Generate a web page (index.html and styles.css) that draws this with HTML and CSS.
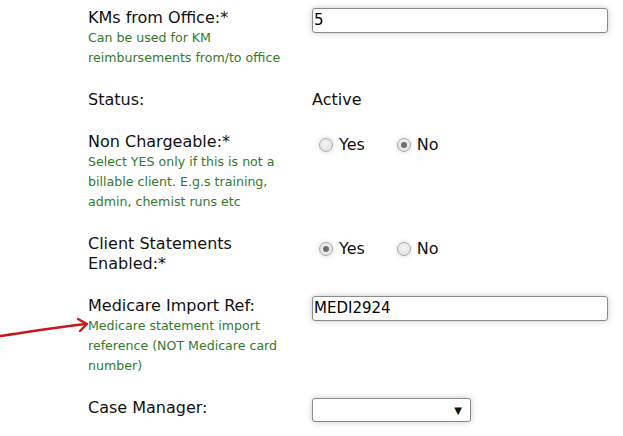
FILE: index.html
```html
<!DOCTYPE html>
<html>
<head>
<meta charset="utf-8">
<link rel="stylesheet" href="styles.css">
</head>
<body>
<svg class="arrow" width="100" height="30" viewBox="0 0 100 30" aria-hidden="true">
  <path d="M0 25 C 22 22, 50 17, 86 13" fill="none" stroke="#c8171c" stroke-width="2.4" stroke-linecap="round"/>
  <path d="M78 8 L87 13 L80 20" fill="none" stroke="#c8171c" stroke-width="2.4" stroke-linecap="round" stroke-linejoin="round"/>
</svg>
<form class="form">
  <div class="row">
    <div class="label">
      <div class="title">KMs from Office:*</div>
      <div class="help">Can be used for KM reimbursements from/to office</div>
    </div>
    <div class="field"><div class="input wide">5</div></div>
  </div>

  <div class="row">
    <div class="label"><div class="title">Status:</div></div>
    <div class="field"><div class="value">Active</div></div>
  </div>

  <div class="row">
    <div class="label">
      <div class="title">Non Chargeable:*</div>
      <div class="help">Select YES only if this is not a billable client. E.g.s training, admin, chemist runs etc</div>
    </div>
    <div class="field">
      <div class="radios">
        <span class="radio"></span><span class="opt">Yes</span>
        <span class="radio on"></span><span class="opt">No</span>
      </div>
    </div>
  </div>

  <div class="row">
    <div class="label"><div class="title">Client Statements Enabled:*</div></div>
    <div class="field">
      <div class="radios low">
        <span class="radio on"></span><span class="opt">Yes</span>
        <span class="radio"></span><span class="opt">No</span>
      </div>
    </div>
  </div>

  <div class="row">
    <div class="label">
      <div class="title">Medicare Import Ref:</div>
      <div class="help">Medicare statement import reference (NOT Medicare card number)</div>
    </div>
    <div class="field"><div class="input wide">MEDI2924</div></div>
  </div>

  <div class="row">
    <div class="label"><div class="title">Case Manager:</div></div>
    <div class="field"><div class="input select"><span class="caret">▼</span></div></div>
  </div>
</form>
</body>
</html>
```
FILE: styles.css
```css
html, body {
  margin: 0;
  padding: 0;
  background: #ffffff;
}
body {
  position: relative;
  width: 623px;
  height: 436px;
  overflow: hidden;
  font-family: "DejaVu Sans", Verdana, sans-serif;
  color: #111111;
}
.form {
  padding-top: 8px;
  padding-left: 88px;
}
.row {
  display: grid;
  grid-template-columns: 224px 296px;
  margin-bottom: 22px;
}
.label {
  padding-right: 18px;
}
.title {
  font-size: 16px;
  line-height: 20px;
}
.help {
  font-size: 12.6px;
  line-height: 20px;
  color: #35792c;
}
.field {
  font-size: 16px;
  line-height: 20px;
}
.input {
  box-sizing: border-box;
  height: 25px;
  border: 1px solid #8a8a8a;
  border-radius: 3px;
  box-shadow: 0 0 6px rgba(0, 0, 0, 0.22);
  background: #fff;
  padding: 1px 1px;
  font-size: 15px;
  line-height: 21px;
  color: #000;
}
.wide {
  width: 296px;
}
.select {
  width: 159px;
  height: 24px;
  position: relative;
}
.caret {
  position: absolute;
  right: 8px;
  top: 1px;
  font-size: 10px;
  color: #111;
}
.value {
  line-height: 20px;
}
.radios {
  display: flex;
  align-items: center;
  padding-top: 3px;
  height: 20px;
}
.radios.low {
  padding-top: 5px;
}
.radio {
  box-sizing: border-box;
  width: 14px;
  height: 14px;
  border-radius: 50%;
  border: 1px solid #a9a9a9;
  background: radial-gradient(circle at 50% 40%, #f4f4f4 0%, #dcdcdc 100%);
  box-shadow: 0 0 5px rgba(0, 0, 0, 0.18);
  margin-left: 7px;
  margin-right: 6px;
  position: relative;
}
.radio + .opt + .radio {
  margin-left: 32px;
}
.radio.on::after {
  content: "";
  position: absolute;
  left: 3px;
  top: 3px;
  width: 6px;
  height: 6px;
  border-radius: 50%;
  background: #6e6e6e;
}
.opt {
  font-size: 16px;
}
.arrow {
  position: absolute;
  left: 0;
  top: 311px;
}
```
